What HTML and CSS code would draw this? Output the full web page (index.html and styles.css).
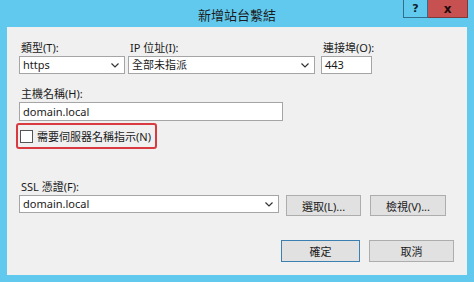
FILE: index.html
```html
<!DOCTYPE html>
<html lang="zh-Hant">
<head>
    <meta charset="UTF-8">
    <title>新增站台繫結</title>
    <link rel="stylesheet" href="styles.css">
</head>
<body>
    <div class="dialog">
        <div class="titlebar">
            <div class="title">新增站台繫結</div>
            <div class="caption-buttons">
                <div class="cap-btn help">?</div>
                <div class="cap-btn close">x</div>
            </div>
        </div>
        <div class="client">
            <div class="row">
                <div class="field">
                    <div class="label">類型(T):</div>
                    <div class="combo type">
                        <span>https</span>
                        <svg class="chev" width="8" height="5" viewBox="0 0 8 5"><polyline points="0.5,0.5 4,4 7.5,0.5" fill="none" stroke="#333" stroke-width="1.2"/></svg>
                    </div>
                </div>
                <div class="field">
                    <div class="label">IP 位址(I):</div>
                    <div class="combo ip">
                        <span>全部未指派</span>
                        <svg class="chev" width="8" height="5" viewBox="0 0 8 5"><polyline points="0.5,0.5 4,4 7.5,0.5" fill="none" stroke="#333" stroke-width="1.2"/></svg>
                    </div>
                </div>
                <div class="field port-field">
                    <div class="label">連接埠(O):</div>
                    <div class="textbox port">443</div>
                </div>
            </div>

            <div class="label host-label">主機名稱(H):</div>
            <div class="textbox host">domain.local</div>

            <div class="highlight">
                <div class="checkbox"></div>
                <span class="check-label">需要伺服器名稱指示(N)</span>
            </div>

            <div class="label ssl-label">SSL 憑證(F):</div>
            <div class="row ssl-row">
                <div class="combo ssl">
                    <span>domain.local</span>
                    <svg class="chev" width="8" height="5" viewBox="0 0 8 5"><polyline points="0.5,0.5 4,4 7.5,0.5" fill="none" stroke="#333" stroke-width="1.2"/></svg>
                </div>
                <div class="button select">選取(L)...</div>
                <div class="button view">檢視(V)...</div>
            </div>

            <div class="footer">
                <div class="button ok">確定</div>
                <div class="button cancel">取消</div>
            </div>
        </div>
    </div>
</body>
</html>
```

FILE: styles.css
```css
body {
    margin: 0;
    background: #60c9ed;
    font-family: "Noto Sans", "Noto Sans CJK TC", sans-serif;
    font-size: 11px;
    color: #1a1a1a;
}

.dialog {
    width: 474px;
    height: 282px;
    background: #60c9ed;
    position: relative;
}

/* 標題列 */
.titlebar {
    height: 27px;
    display: flex;
    justify-content: center;
}

.title {
    font-size: 13px;
    line-height: 30px;
    color: #1c1c1c;
}

.caption-buttons {
    position: absolute;
    top: 0;
    right: 6px;
    display: flex;
}

.cap-btn {
    height: 18px;
    display: flex;
    align-items: center;
    justify-content: center;
    font-family: "DejaVu Sans", sans-serif;
    font-weight: bold;
    box-sizing: border-box;
}

.help {
    width: 25px;
    border: 1px solid #2f6e8c;
    border-top: none;
    font-size: 11px;
    color: #10202a;
}

.close {
    width: 40px;
    background: #c75050;
    border: 1px solid #7d3a3a;
    border-top: none;
    border-left: none;
    font-size: 12px;
    color: #1b0a0a;
}

/* 內容區 */
.client {
    margin: 0 7px;
    height: 248px;
    background: #f0f0f0;
    padding: 13px 13px 0 12px;
    box-sizing: border-box;
    white-space: nowrap;
}

.row {
    display: flex;
}

.field {
    display: flex;
    flex-direction: column;
    margin-right: 3px;
}

.port-field {
    margin-left: 3px;
}

.label {
    line-height: 15px;
    padding-left: 2px;
    margin-bottom: 1px;
}

.combo,
.textbox {
    height: 18px;
    box-sizing: border-box;
    background: #fff;
    border: 1px solid #a5a5a5;
    display: flex;
    align-items: center;
    padding-left: 3px;
    line-height: 16px;
}

.combo span {
    flex: 1;
}

.chev {
    margin-right: 5px;
}

.type { width: 106px; }
.ip { width: 187px; }
.port { width: 51px; }

.host-label {
    margin-top: 12px;
}

.host {
    width: 264px;
    height: 19px;
}

.highlight {
    margin: 2px 0 0 -3px;
    width: 141px;
    height: 26px;
    box-sizing: border-box;
    border: 2px solid #d93a40;
    border-radius: 3px;
    display: flex;
    align-items: center;
    padding-left: 2px;
}

.checkbox {
    width: 13px;
    height: 13px;
    box-sizing: border-box;
    border: 1px solid #555;
    background: #fff;
    margin-right: 4px;
}

.ssl-label {
    margin-top: 30px;
}

.ssl-row {
    align-items: flex-start;
}

.ssl {
    width: 260px;
    margin-right: 7px;
}

.button {
    height: 21px;
    box-sizing: border-box;
    background: #e1e1e1;
    border: 1px solid #adadad;
    display: flex;
    align-items: center;
    justify-content: center;
}

.select {
    width: 75px;
    margin-right: 9px;
}

.view {
    width: 76px;
}

.footer {
    display: flex;
    justify-content: flex-end;
    margin-top: 24px;
}

.footer .button {
    height: 22px;
}

.ok {
    width: 79px;
    margin-right: 9px;
    border-color: #3c7fb1;
}

.cancel {
    width: 85px;
}
```
